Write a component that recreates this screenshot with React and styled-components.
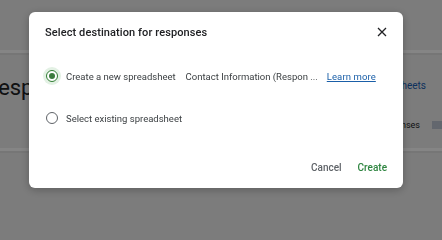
import React from "react";
import styled, { createGlobalStyle } from "styled-components";

const Global = createGlobalStyle`
  html, body { margin: 0; padding: 0; }
  body {
    width: 442px;
    height: 210px;
    overflow: hidden;
    font-family: Roboto, "Liberation Sans", Arial, sans-serif;
    background: #ededed;
  }
  #root { height: 210px; }
`;

const Page = styled.div`
  height: 210px;
  display: flex;
  flex-direction: column;
  background: #ededed;
  overflow: hidden;
`;

const TopArea = styled.div`
  height: 50px;
  flex-shrink: 0;
`;

const Divider = styled.div`
  height: 3px;
  background: #ffffff;
  border-bottom: 2px solid #e2e2e2;
  flex-shrink: 0;
`;

const Card = styled.div`
  height: 93px;
  display: flex;
  flex-direction: column;
  justify-content: flex-start;
  gap: 14px;
  padding-top: 20px;
  box-sizing: border-box;
  flex-shrink: 0;
`;

const CardRow = styled.div`
  display: flex;
  align-items: center;
  justify-content: space-between;
  height: 24px;
`;

const Heading = styled.div`
  font-size: 22px;
  color: #202124;
  margin-left: -15px;
  letter-spacing: -0.2px;
`;

const SheetsLink = styled.div`
  font-size: 10px;
  color: #1a5fb4;
  margin-right: 16px;
  margin-bottom: 3px;
`;

const AcceptRow = styled.div`
  height: 24px;
  display: flex;
  align-items: center;
  justify-content: flex-end;
  gap: 12px;
  font-size: 9px;
  color: #202124;
`;

const ToggleStub = styled.div`
  width: 14px;
  height: 8px;
  background: #bfc6d4;
  margin-right: -4px;
`;

const Scrim = styled.div`
  position: fixed;
  inset: 0;
  background: rgba(0, 0, 0, 0.48);
  display: flex;
  align-items: flex-start;
  justify-content: flex-start;
  padding: 12px 0 0 29px;
`;

const Dialog = styled.div`
  width: 374px;
  height: 176px;
  background: #ffffff;
  border-radius: 6px;
  box-shadow: 0 2px 8px rgba(0, 0, 0, 0.25);
  display: flex;
  flex-direction: column;
  box-sizing: border-box;
`;

const Header = styled.div`
  height: 40px;
  display: flex;
  align-items: center;
  justify-content: space-between;
  padding: 0 14px 0 16px;
`;

const Title = styled.div`
  font-size: 11px;
  font-weight: 500;
  color: #202124;
  letter-spacing: 0.1px;
`;

const CloseButton = styled.button`
  width: 14px;
  height: 14px;
  border: none;
  background: none;
  padding: 0;
  display: flex;
  align-items: center;
  justify-content: center;
  cursor: pointer;
`;

const Body = styled.div`
  display: flex;
  flex-direction: column;
  gap: 14px;
  padding: 10px 16px 0 17px;
`;

const OptionRow = styled.label`
  height: 28px;
  display: flex;
  align-items: center;
  font-size: 9.5px;
  color: #3c4043;
`;

const RadioWrap = styled.span`
  width: 12px;
  height: 12px;
  position: relative;
  display: inline-flex;
  align-items: center;
  justify-content: center;
  margin-right: 8px;
  flex-shrink: 0;
`;

const Halo = styled.span`
  position: absolute;
  inset: -3px;
  border-radius: 50%;
  background: #e3f1e4;
`;

const RadioCircle = styled.span`
  position: relative;
  box-sizing: border-box;
  width: 12px;
  height: 12px;
  border-radius: 50%;
  border: 1.2px solid ${(p) => (p.$checked ? "#2f7d32" : "#5f6368")};
  background: #ffffff;
  display: flex;
  align-items: center;
  justify-content: center;
`;

const Dot = styled.span`
  width: 6px;
  height: 6px;
  border-radius: 50%;
  background: #3b7b3e;
`;

const Label = styled.span`
  white-space: nowrap;
`;

const FileName = styled.span`
  margin-left: 10px;
  white-space: nowrap;
  color: #3c4043;
`;

const LearnMore = styled.a`
  margin-left: 9px;
  color: #1a5fa8;
  text-decoration: underline;
  white-space: nowrap;
  letter-spacing: 0.1px;
`;

const Footer = styled.div`
  margin-top: auto;
  height: 42px;
  display: flex;
  align-items: center;
  justify-content: flex-end;
  padding-right: 8px;
`;

const TextButton = styled.button`
  border: none;
  background: none;
  font-family: Roboto, "Liberation Sans", Arial, sans-serif;
  font-size: 10px;
  font-weight: 500;
  padding: 6px 8px;
  color: ${(p) => (p.$primary ? "#2e8540" : "#5f6368")};
  cursor: pointer;
`;

function Radio({ checked }) {
  return (
    <RadioWrap>
      {checked && <Halo />}
      <RadioCircle $checked={checked}>{checked && <Dot />}</RadioCircle>
    </RadioWrap>
  );
}

export default function App() {
  return (
    <>
      <Global />
      <Page>
        <TopArea />
        <Divider />
        <Card>
          <CardRow>
            <Heading>Responses</Heading>
            <SheetsLink>Link to Sheets</SheetsLink>
          </CardRow>
          <AcceptRow>
            <span>Accepting responses</span>
            <ToggleStub />
          </AcceptRow>
        </Card>
        <Divider />
      </Page>
      <Scrim>
        <Dialog role="dialog" aria-label="Select destination for responses">
          <Header>
            <Title>Select destination for responses</Title>
            <CloseButton aria-label="Close">
              <svg width="10" height="10" viewBox="0 0 10 10">
                <path
                  d="M1 1 L9 9 M9 1 L1 9"
                  stroke="#202124"
                  strokeWidth="1.3"
                  fill="none"
                />
              </svg>
            </CloseButton>
          </Header>
          <Body>
            <OptionRow>
              <Radio checked />
              <Label>Create a new spreadsheet</Label>
              <FileName>Contact Information (Respon ...</FileName>
              <LearnMore href="#">Learn more</LearnMore>
            </OptionRow>
            <OptionRow>
              <Radio />
              <Label>Select existing spreadsheet</Label>
            </OptionRow>
          </Body>
          <Footer>
            <TextButton>Cancel</TextButton>
            <TextButton $primary>Create</TextButton>
          </Footer>
        </Dialog>
      </Scrim>
    </>
  );
}
